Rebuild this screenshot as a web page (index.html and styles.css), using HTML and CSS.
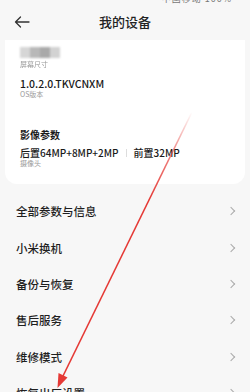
FILE: index.html
```html
<!DOCTYPE html>
<html lang="zh">
<head>
<meta charset="utf-8">
<link rel="stylesheet" href="styles.css">
</head>
<body>
<div class="page">
  <div class="status"><span class="status-text">中国移动 100%</span></div>
  <div class="header">
    <svg class="back" width="16" height="12" viewBox="0 0 16 12"><path d="M15 6H1.5M6.5 1L1.5 6l5 5" fill="none" stroke="#333" stroke-width="1.3" stroke-linecap="round" stroke-linejoin="round"/></svg>
    <div class="title">我的设备</div>
  </div>
  <div class="card">
    <div class="blur-block"><span class="b1"></span><span class="b2"></span><span class="b3"></span><span class="b4"></span></div>
    <div class="sub blurred">屏幕尺寸</div>
    <div class="value ver">1.0.2.0.TKVCNXM</div>
    <div class="sub">OS版本</div>
    <div class="value head">影像参数</div>
    <div class="value cam"><span>后置64MP+8MP+2MP</span><span class="sep"></span><span>前置32MP</span></div>
    <div class="sub">摄像头</div>
  </div>
  <div class="list">
    <div class="row"><span>全部参数与信息</span><i class="chev"></i></div>
    <div class="row"><span>小米换机</span><i class="chev"></i></div>
    <div class="row"><span>备份与恢复</span><i class="chev"></i></div>
    <div class="row"><span>售后服务</span><i class="chev"></i></div>
    <div class="row"><span>维修模式</span><i class="chev"></i></div>
    <div class="row"><span>恢复出厂设置</span><i class="chev"></i></div>
  </div>
  <svg class="arrow" width="250" height="392" viewBox="0 0 250 392">
    <defs>
      <linearGradient id="g" gradientUnits="userSpaceOnUse" x1="192" y1="112" x2="150" y2="200">
        <stop offset="0" stop-color="#e53935" stop-opacity="0"/>
        <stop offset="0.45" stop-color="#e53935" stop-opacity="0.6"/>
        <stop offset="1" stop-color="#e53935" stop-opacity="1"/>
      </linearGradient>
    </defs>
    <line x1="192" y1="112" x2="63" y2="376" stroke="url(#g)" stroke-width="1.6"/>
    <polygon points="57.5,388 67.5,377.5 58.5,373" fill="#e53935"/>
  </svg>
</div>
</body>
</html>
```
FILE: styles.css
```css
* { box-sizing: border-box; }
html, body { margin: 0; padding: 0; }
body {
  background: #f7f7f7;
  font-family: "Noto Sans CJK SC", "Noto Sans", sans-serif;
  color: #222;
}
.page {
  position: relative;
  width: 250px;
  height: 392px;
  overflow: hidden;
}
.status {
  height: 4px;
  overflow: hidden;
  display: flex;
  justify-content: flex-end;
  padding-right: 18px;
}
.status-text {
  font-size: 9px;
  line-height: 9px;
  margin-top: -6px;
  color: #777;
  letter-spacing: 1px;
}
.header {
  height: 36px;
  display: flex;
  align-items: center;
  position: relative;
  padding-left: 14px;
}
.back { display: block; }
.title {
  position: absolute;
  left: 0; right: 0;
  text-align: center;
  font-size: 13px;
  line-height: 36px;
  color: #222;
  font-weight: 500;
}
.card {
  background: #fff;
  margin: 0 5px;
  border-radius: 0 0 12px 12px;
  padding: 7px 15px 16px;
}
.blur-block {
  display: flex;
  height: 11px;
  width: 40px;
  filter: blur(0.8px);
}
.blur-block span { flex: 1; height: 11px; }
.b1 { background: #d6d6d6; }
.b2 { background: #b8b8b8; }
.b3 { background: #a9a9a9; }
.b4 { background: #d2d2d2; }
.sub {
  font-size: 7px;
  line-height: 9px;
  color: #9a9a9a;
}
.blurred {
  margin-top: 2px;
  filter: blur(0.5px);
  height: 8px;
  overflow: hidden;
}
.value {
  font-size: 10px;
  line-height: 13px;
  color: #1a1a1a;
  font-weight: 500;
}
.ver { margin-top: 9px; font-size: 10.5px; }
.head { margin-top: 29px; font-weight: 600; }
.cam {
  margin-top: 5px;
  display: flex;
  align-items: center;
}
.sep {
  width: 1px;
  height: 8px;
  background: #ddd;
  margin: 0 7px 0 7px;
}
.list { padding-top: 9px; }
.row {
  height: 36.4px;
  display: flex;
  align-items: center;
  justify-content: space-between;
  padding: 0 14px 0 16px;
  font-size: 11.5px;
  color: #1f1f1f;
  font-weight: 500;
}
.chev {
  width: 6px;
  height: 6px;
  border-top: 1.2px solid #aaa;
  border-right: 1.2px solid #aaa;
  transform: rotate(45deg);
  margin-right: 2px;
}
.arrow {
  position: absolute;
  left: 0;
  top: 0;
  pointer-events: none;
}
```
